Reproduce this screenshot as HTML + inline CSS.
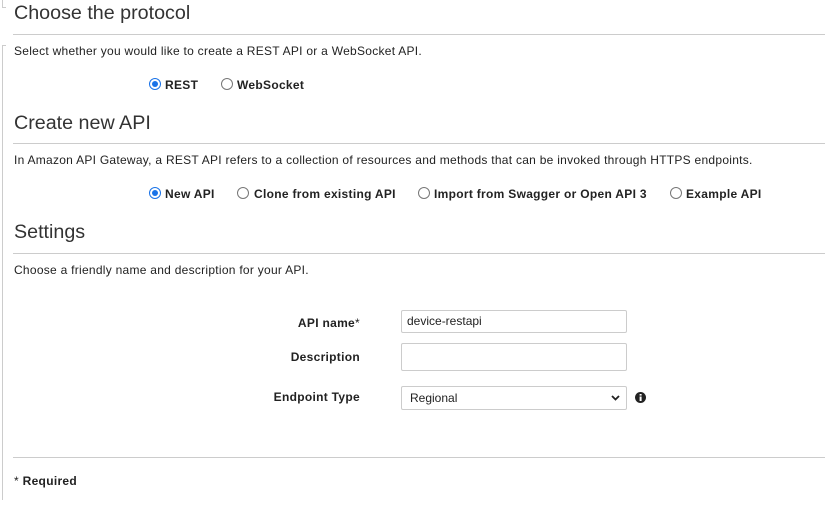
<!DOCTYPE html>
<html><head><style>
body{margin:0;width:825px;height:510px;background:#fff;position:relative;overflow:hidden;font-family:"Liberation Sans",Arial,sans-serif;color:#222}
.a{position:absolute;white-space:nowrap}
.h{font-size:19.7px;color:#333;line-height:23px}
.t{font-size:12px;line-height:14px;color:#222;letter-spacing:0.27px}
.b{font-size:12px;line-height:14px;font-weight:bold;color:#222;letter-spacing:0.3px}
.hr{position:absolute;left:13px;right:0;height:1px;background:#ccc}
.r{position:absolute;width:10px;height:10px;border:1px solid #777;border-radius:50%;background:#fff}
.r.on{border-color:#1a73e8;background:#fff}
.r.on::after{content:"";position:absolute;left:2px;top:2px;width:6px;height:6px;border-radius:50%;background:#1a73e8}
.in{position:absolute;border:1px solid #ccc;border-radius:2px;background:#fff;font-size:12px;color:#222;box-sizing:border-box;padding-left:5px}
</style></head><body>
<div style="position:absolute;left:2px;top:0;width:1px;height:8px;background:#ccc"></div>
<div style="position:absolute;left:2px;top:7px;width:4px;height:1px;background:#ccc"></div>
<div style="position:absolute;left:2px;top:45px;width:4px;height:1px;background:#ccc"></div>
<div style="position:absolute;left:2px;top:45px;width:1px;height:455px;background:#ccc"></div>

<div class="a h" style="left:14px;top:2px">Choose the protocol</div>
<div class="hr" style="top:34px"></div>
<div class="a t" style="left:14px;top:44px">Select whether you would like to create a REST API or a WebSocket API.</div>
<div class="r on" style="left:149px;top:78px"></div><div class="a b" style="left:165px;top:78px">REST</div>
<div class="r" style="left:221px;top:78px"></div><div class="a b" style="left:237px;top:78px">WebSocket</div>

<div class="a h" style="left:14px;top:112px">Create new API</div>
<div class="hr" style="top:143px"></div>
<div class="a t" style="left:14px;top:153px">In Amazon API Gateway, a REST API refers to a collection of resources and methods that can be invoked through HTTPS endpoints.</div>
<div class="r on" style="left:149px;top:187px"></div><div class="a b" style="left:165px;top:187px">New API</div>
<div class="r" style="left:237px;top:187px"></div><div class="a b" style="left:254px;top:187px">Clone from existing API</div>
<div class="r" style="left:418px;top:187px"></div><div class="a b" style="left:434px;top:187px">Import from Swagger or Open API 3</div>
<div class="r" style="left:670px;top:187px"></div><div class="a b" style="left:686px;top:187px">Example API</div>

<div class="a h" style="left:14px;top:221px">Settings</div>
<div class="hr" style="top:253px"></div>
<div class="a t" style="left:14px;top:263px">Choose a friendly name and description for your API.</div>

<div class="a b" style="right:465px;top:316px">API name<span style="font-weight:normal">*</span></div>
<div class="in" style="left:401px;top:310px;width:226px;height:23px;line-height:21px">device-restapi</div>
<div class="a b" style="right:465px;top:350px">Description</div>
<div class="in" style="left:401px;top:343px;width:226px;height:28px"></div>
<div class="a b" style="right:465px;top:390px">Endpoint Type</div>
<div class="in" style="left:401px;top:386px;width:226px;height:24px;line-height:22px;padding-left:8px">Regional
<svg style="position:absolute;right:6px;top:8px" width="9" height="6" viewBox="0 0 9 6"><path d="M1 1L4.5 4.5L8 1" stroke="#222" stroke-width="1.8" fill="none"/></svg></div>
<svg style="position:absolute;left:635px;top:392px" width="11" height="11" viewBox="0 0 11 11"><circle cx="5.5" cy="5.5" r="5.5" fill="#222"/><rect x="4.6" y="4.5" width="2" height="4.5" fill="#fff"/><rect x="4.6" y="2" width="2" height="1.6" fill="#fff"/></svg>

<div class="hr" style="top:457px"></div>
<div class="a b" style="left:14px;top:474px"><span style="font-weight:normal">*</span> Required</div>
</body></html>
